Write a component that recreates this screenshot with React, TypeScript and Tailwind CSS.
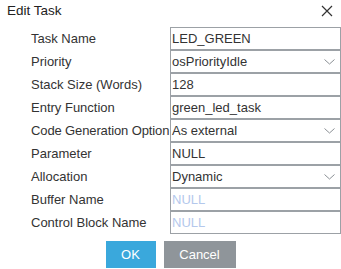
import React from "react";

type Row = { label: string; value: string; kind: "input" | "select" | "placeholder" };

const rows: Row[] = [
  { label: "Task Name", value: "LED_GREEN", kind: "input" },
  { label: "Priority", value: "osPriorityIdle", kind: "select" },
  { label: "Stack Size (Words)", value: "128", kind: "input" },
  { label: "Entry Function", value: "green_led_task", kind: "input" },
  { label: "Code Generation Option", value: "As external", kind: "select" },
  { label: "Parameter", value: "NULL", kind: "input" },
  { label: "Allocation", value: "Dynamic", kind: "select" },
  { label: "Buffer Name", value: "NULL", kind: "placeholder" },
  { label: "Control Block Name", value: "NULL", kind: "placeholder" },
];

function Chevron() {
  return (
    <svg width="11" height="6" viewBox="0 0 11 6" className="mr-[5px] shrink-0">
      <path d="M0.5 0.5 L5.5 5 L10.5 0.5" fill="none" stroke="#8a8f94" strokeWidth="1" />
    </svg>
  );
}

export default function App() {
  return (
    <div
      className="w-[341px] h-[269px] bg-white text-[#333] overflow-hidden"
      style={{ fontFamily: '"Liberation Sans", Arial, sans-serif' }}
    >
      <div className="h-[27px] flex items-start justify-between pl-[7px] pr-[8px] pt-[3px]">
        <span className="text-[13.5px] leading-[16px] text-[#222]">Edit Task</span>
        <svg width="12" height="12" viewBox="0 0 12 12" className="mt-[2px]">
          <path d="M1 1 L11 11 M11 1 L1 11" stroke="#333" strokeWidth="1.2" fill="none" />
        </svg>
      </div>
      <div className="flex flex-col">
        {rows.map((r) => (
          <div key={r.label} className="flex h-[23px]">
            <div
              className={
                "w-[170px] pl-[31px] pt-[1px] flex items-center whitespace-nowrap overflow-hidden text-[13px] text-[#333]" +
                (r.label === "Code Generation Option" ? " tracking-[-0.12px]" : "")
              }
            >
              {r.label}
            </div>
            <div className="w-[171px] h-[23px] border border-[#9ca1a6] flex items-center justify-between pl-[1px] text-[13px]">
              <span className={r.kind === "placeholder" ? "text-[#b4c8ec]" : "text-[#333]"}>{r.value}</span>
              {r.kind === "select" && <Chevron />}
            </div>
          </div>
        ))}
      </div>
      <div className="flex justify-center gap-[8px] mt-[7px]">
        <div className="w-[50px] h-[27px] bg-[#3aa8dc] text-white text-[13px] flex items-center justify-center">
          OK
        </div>
        <div className="w-[72px] h-[27px] bg-[#8f959a] text-white text-[13px] flex items-center justify-center">
          Cancel
        </div>
      </div>
    </div>
  );
}
